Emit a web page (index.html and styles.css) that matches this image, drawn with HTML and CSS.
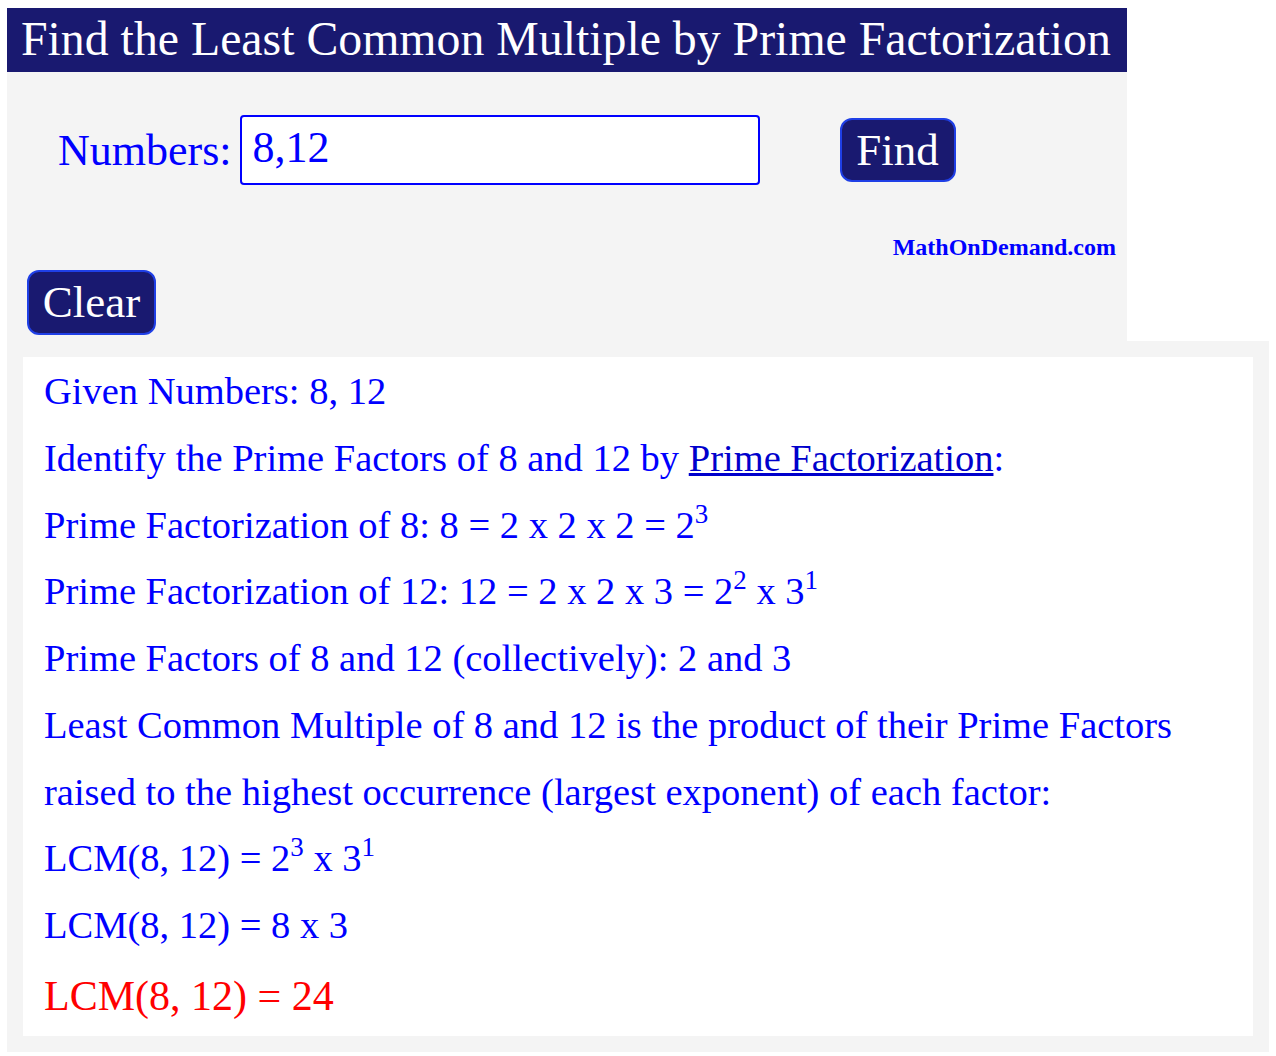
FILE: index.html
```html
<!DOCTYPE html>
<html>
<head>
<meta charset="utf-8">
<title>LCM by Prime Factorization</title>
<link rel="stylesheet" href="styles.css">
</head>
<body>
<div class="top">
  <h1 class="title">Find the Least Common Multiple by Prime Factorization</h1>
  <div class="form-row">
    <label class="label">Numbers:</label>
    <div class="input">8,12</div>
    <button class="btn btn-find">Find</button>
  </div>
  <div class="brand-row"><span class="brand">MathOnDemand.com</span></div>
  <div class="clear-row"><button class="btn btn-clear">Clear</button></div>
</div>
<div class="results">
  <div class="card">
    <p class="line">Given Numbers: 8, 12</p>
    <p class="line">Identify the Prime Factors of 8 and 12 by <a class="link" href="#">Prime Factorization</a>:</p>
    <p class="line">Prime Factorization of 8: 8 = 2 x 2 x 2 = 2<sup>3</sup></p>
    <p class="line">Prime Factorization of 12: 12 = 2 x 2 x 3 = 2<sup>2</sup> x 3<sup>1</sup></p>
    <p class="line">Prime Factors of 8 and 12 (collectively): 2 and 3</p>
    <p class="line">Least Common Multiple of 8 and 12 is the product of their Prime Factors</p>
    <p class="line">raised to the highest occurrence (largest exponent) of each factor:</p>
    <p class="line">LCM(8, 12) = 2<sup>3</sup> x 3<sup>1</sup></p>
    <p class="line">LCM(8, 12) = 8 x 3</p>
    <p class="line answer">LCM(8, 12) = 24</p>
  </div>
</div>
</body>
</html>
```
FILE: styles.css
```css
html, body {
  margin: 0;
  padding: 0;
  background: #ffffff;
}
body {
  padding: 8px 7px 0 7px;
  font-family: "Liberation Serif", "Times New Roman", serif;
}
.top {
  width: 1120px;
  background: #f4f4f4;
  height: 333px;
  box-sizing: border-box;
}
.title {
  margin: 0;
  height: 64px;
  background: #191970;
  color: #ffffff;
  font-weight: normal;
  font-size: 47.8px;
  line-height: 62px;
  padding-left: 14px;
  white-space: nowrap;
}
.form-row {
  display: flex;
  align-items: center;
  padding: 43px 0 0 51px;
  height: 70px;
}
.label {
  color: #0000ff;
  font-size: 44px;
  white-space: nowrap;
}
.input {
  margin-left: 8px;
  width: 520px;
  height: 70px;
  box-sizing: border-box;
  border: 2px solid #0000ff;
  border-radius: 4px;
  background: #ffffff;
  color: #0000ff;
  font-size: 44px;
  line-height: 62px;
  padding-left: 11px;
}
.btn {
  background: #191970;
  color: #ffffff;
  font-family: "Liberation Serif", "Times New Roman", serif;
  border: 2px solid #1f3fe6;
  border-radius: 12px;
  font-size: 45px;
  line-height: 1;
  padding: 0;
  box-sizing: border-box;
}
.btn-find {
  margin-left: 80px;
  width: 116px;
  height: 64px;
}
.brand-row {
  display: flex;
  justify-content: flex-end;
  padding-right: 11px;
  margin-top: 47px;
  height: 30px;
  line-height: 30px;
}
.brand {
  color: #0000ff;
  font-weight: bold;
  font-size: 24px;
}
.clear-row {
  padding-left: 20px;
  margin-top: 8px;
}
.btn-clear {
  width: 129px;
  height: 65px;
}
.results {
  width: 1262px;
  background: #f4f4f4;
  padding: 16px;
  box-sizing: border-box;
}
.card {
  background: #ffffff;
  padding: 1px 21px 6px 21px;
}
.line {
  margin: 0;
  color: #0000ff;
  font-size: 38.5px;
  line-height: 66.75px;
  white-space: nowrap;
}
.line sup {
  font-size: 27px;
  line-height: 0;
  vertical-align: 15px;
}
.link {
  color: #0000cc;
  text-decoration: underline;
}
.answer {
  color: #ff0000;
  font-size: 42px;
  padding-top: 4px;
}
```
